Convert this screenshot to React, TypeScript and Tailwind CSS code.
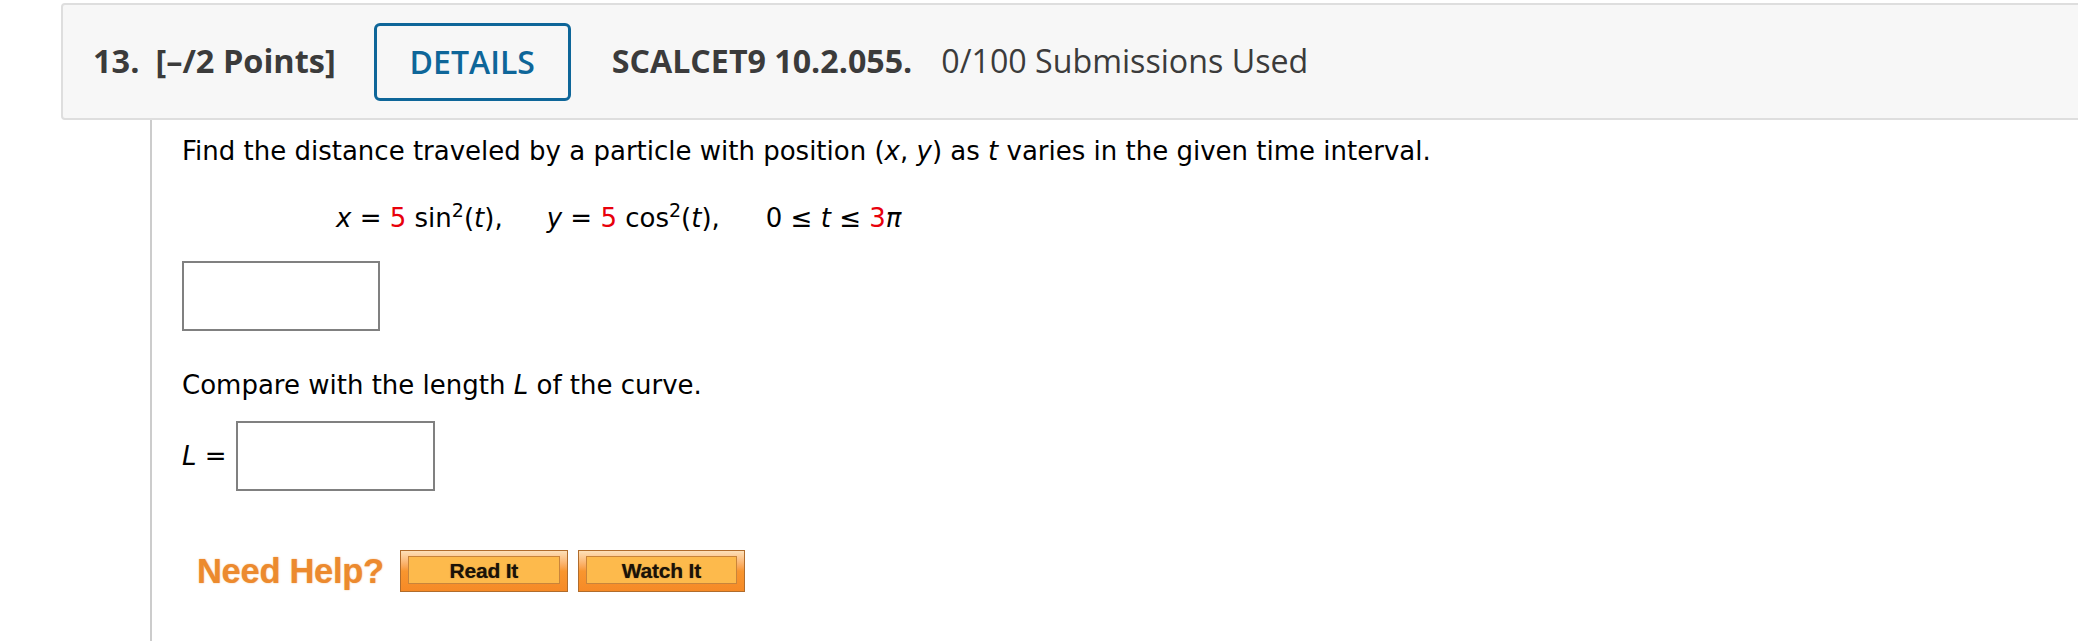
import React from "react";

function OrangeButton({ label, width }: { label: string; width: string }) {
  return (
    <div
      className={`${width} h-[42px] border border-[#b06c2c] bg-gradient-to-b from-[#fde0b8] via-[#f8962f] to-[#f68a26] px-[7px] pt-[5px] pb-[7px]`}
    >
      <div className="h-full w-full border border-[#c9843a] bg-[#fdba4c] flex items-center justify-center">
        <span className="font-['Liberation_Sans',Arial,sans-serif] font-bold text-[21px] text-[#1a1208] leading-none tracking-[-0.2px] [text-shadow:0_0_1px_rgba(0,0,0,0.5)]">
          {label}
        </span>
      </div>
    </div>
  );
}

export default function App() {
  const body = "font-['DejaVu_Sans',Verdana,sans-serif] text-[26px] text-black";
  const sup = "text-[19px] relative -top-[0.55em] align-baseline leading-none";
  return (
    <div className="w-[2078px] h-[641px] overflow-hidden bg-white relative">
      <div className="pt-[3px] pl-[61px]">
        <div className="w-[2040px] h-[117px] bg-[#f7f7f7] border-2 border-[#dedede] rounded-[4px] flex items-center pl-[30px] font-['Open_Sans',sans-serif] text-[#3b3b3b]">
          <span className="text-[32.5px] font-bold">13.</span>
          <span className="text-[32.5px] font-bold ml-[16px]">[–/2 Points]</span>
          <div className="ml-[38px] w-[197px] h-[78px] border-[3px] border-[#0e6699] rounded-[6px] flex items-center justify-center">
            <span className="text-[32px] font-semibold text-[#0e6699]">DETAILS</span>
          </div>
          <span className="ml-[41px] text-[32.2px] font-bold">SCALCET9 10.2.055.</span>
          <span className="ml-[29px] text-[32.2px]">0/100 Submissions Used</span>
        </div>
      </div>
      <div className="ml-[150px] border-l-2 border-[#cccccc] h-[522px] pl-[30px] pt-[16px]">
        <p className={`${body} leading-[30px]`}>
          Find the distance traveled by a particle with position (<i>x</i>, <i>y</i>) as <i>t</i> varies in the given time interval.
        </p>
        <p className={`${body} leading-[30px] mt-[37px] pl-[154px] whitespace-pre`}>
          <span>
            <i>x</i> = <span className="text-[#e8000b]">5</span> sin<sup className={sup}>2</sup>(<i>t</i>),
          </span>
          <span className="ml-[44px]">
            <i>y</i> = <span className="text-[#e8000b]">5</span> cos<sup className={sup}>2</sup>(<i>t</i>),
          </span>
          <span className="ml-[46px]">
            0 ≤ <i>t</i> ≤ <span className="text-[#e8000b]">3</span><i>π</i>
          </span>
        </p>
        <div className="mt-[28px] w-[198px] h-[70px] border-2 border-[#808080] bg-white"></div>
        <p className={`${body} leading-[30px] mt-[39px]`}>
          Compare with the length <i>L</i> of the curve.
        </p>
        <div className="mt-[21px] flex items-center">
          <span className={`${body} whitespace-pre w-[54px]`}>
            <i>L</i> =
          </span>
          <div className="w-[199px] h-[70px] border-2 border-[#808080] bg-white"></div>
        </div>
        <div className="mt-[59px] flex items-center pl-[15px]">
          <span className="font-['Liberation_Sans',Arial,sans-serif] font-bold text-[34.5px] text-[#ec8a2e] leading-none tracking-[-0.3px] [text-shadow:0_0_1.5px_rgba(236,138,46,0.7)]">
            Need Help?
          </span>
          <div className="ml-[16px] flex gap-[10px] shrink-0">
            <OrangeButton label="Read It" width="w-[168px] shrink-0" />
            <OrangeButton label="Watch It" width="w-[167px] shrink-0" />
          </div>
        </div>
      </div>
    </div>
  );
}
